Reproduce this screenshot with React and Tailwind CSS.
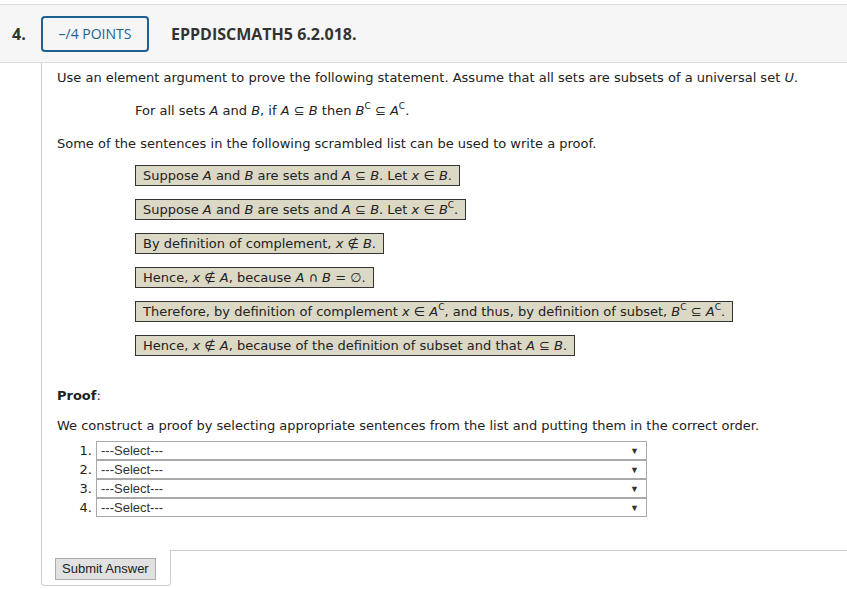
import React from 'react';

const V = ({ children }) => <i className="italic">{children}</i>;
const C = () => <sup className="text-[9px] relative -top-[1px] align-super leading-none">C</sup>;

const sentences = [
  <>Suppose <V>A</V> and <V>B</V> are sets and <V>A</V> ⊆ <V>B</V>. Let <V>x</V> ∈ <V>B</V>.</>,
  <>Suppose <V>A</V> and <V>B</V> are sets and <V>A</V> ⊆ <V>B</V>. Let <V>x</V> ∈ <V>B</V><C />.</>,
  <>By definition of complement, <V>x</V> ∉ <V>B</V>.</>,
  <>Hence, <V>x</V> ∉ <V>A</V>, because <V>A</V> ∩ <V>B</V> = ∅.</>,
  <>Therefore, by definition of complement <V>x</V> ∈ <V>A</V><C />, and thus, by definition of subset, <V>B</V><C /> ⊆ <V>A</V><C />.</>,
  <>Hence, <V>x</V> ∉ <V>A</V>, because of the definition of subset and that <V>A</V> ⊆ <V>B</V>.</>,
];

export default function App() {
  return (
    <div className="w-[847px] h-[589px] bg-white overflow-hidden pt-[4px] text-[#222]">
      {/* header */}
      <div className="h-[59px] bg-[#f6f6f6] border-y border-[#dcdcdc] flex items-center font-['Open_Sans',sans-serif]">
        <span className="w-[41px] pl-[12px] text-[16px] font-bold text-[#333]">4.</span>
        <div className="w-[108px] h-[36px] border-2 border-[#1d6290] rounded-[4px] flex items-center justify-center text-[14px] text-[#1d6290]">
          –/4 POINTS
        </div>
        <span className="ml-[22px] text-[16px] font-bold text-[#333]">EPPDISCMATH5 6.2.018.</span>
      </div>

      {/* body */}
      <div className="ml-[41px] border-l border-[#cccccc] pl-[15px] pt-[6px] pb-[33px] font-['DejaVu_Sans',Verdana,sans-serif] text-[13px] leading-[18px]">
        <p>Use an element argument to prove the following statement. Assume that all sets are subsets of a universal set <V>U</V>.</p>
        <p className="ml-[78px] mt-[15px]">For all sets <V>A</V> and <V>B</V>, if <V>A</V> ⊆ <V>B</V> then <V>B</V><C /> ⊆ <V>A</V><C />.</p>
        <p className="mt-[15px]">Some of the sentences in the following scrambled list can be used to write a proof.</p>

        <div className="ml-[78px] mt-[12px] flex flex-col items-start gap-[13px]">
          {sentences.map((s, i) => (
            <div key={i} className="bg-[#dbd8c6] border border-[#333] px-[7px] py-[1px] leading-[17px]">
              {s}
            </div>
          ))}
        </div>

        <p className="mt-[31px] font-bold">Proof<span className="font-normal">:</span></p>
        <p className="mt-[12px]">We construct a proof by selecting appropriate sentences from the list and putting them in the correct order.</p>

        <div className="mt-[6px] flex flex-col">
          {[1, 2, 3, 4].map((n) => (
            <div key={n} className="flex items-center">
              <span className="w-[39px] text-right pr-[4px]">{n}.</span>
              <div className="w-[551px] h-[19px] border border-[#a9a9a9] flex items-center justify-between pl-[4px] pr-[7px] font-['Liberation_Sans',Arial,sans-serif] text-[13px] text-[#333]">
                <span>---Select---</span>
                <span className="text-[9px] text-[#333]">▼</span>
              </div>
            </div>
          ))}
        </div>
      </div>

      {/* footer tab */}
      <div className="flex">
        <div className="ml-[41px] w-[130px] h-[36px] border-l border-r border-b border-[#cccccc] rounded-b-[4px] pl-[13px] pt-[5px]">
          <button className="h-[22px] px-[6px] bg-[#e1e1e1] border border-[#adadad] font-['Liberation_Sans',Arial,sans-serif] text-[13px] text-[#222]">
            Submit Answer
          </button>
        </div>
        <div className="flex-1 border-t border-[#cccccc]"></div>
      </div>
    </div>
  );
}
